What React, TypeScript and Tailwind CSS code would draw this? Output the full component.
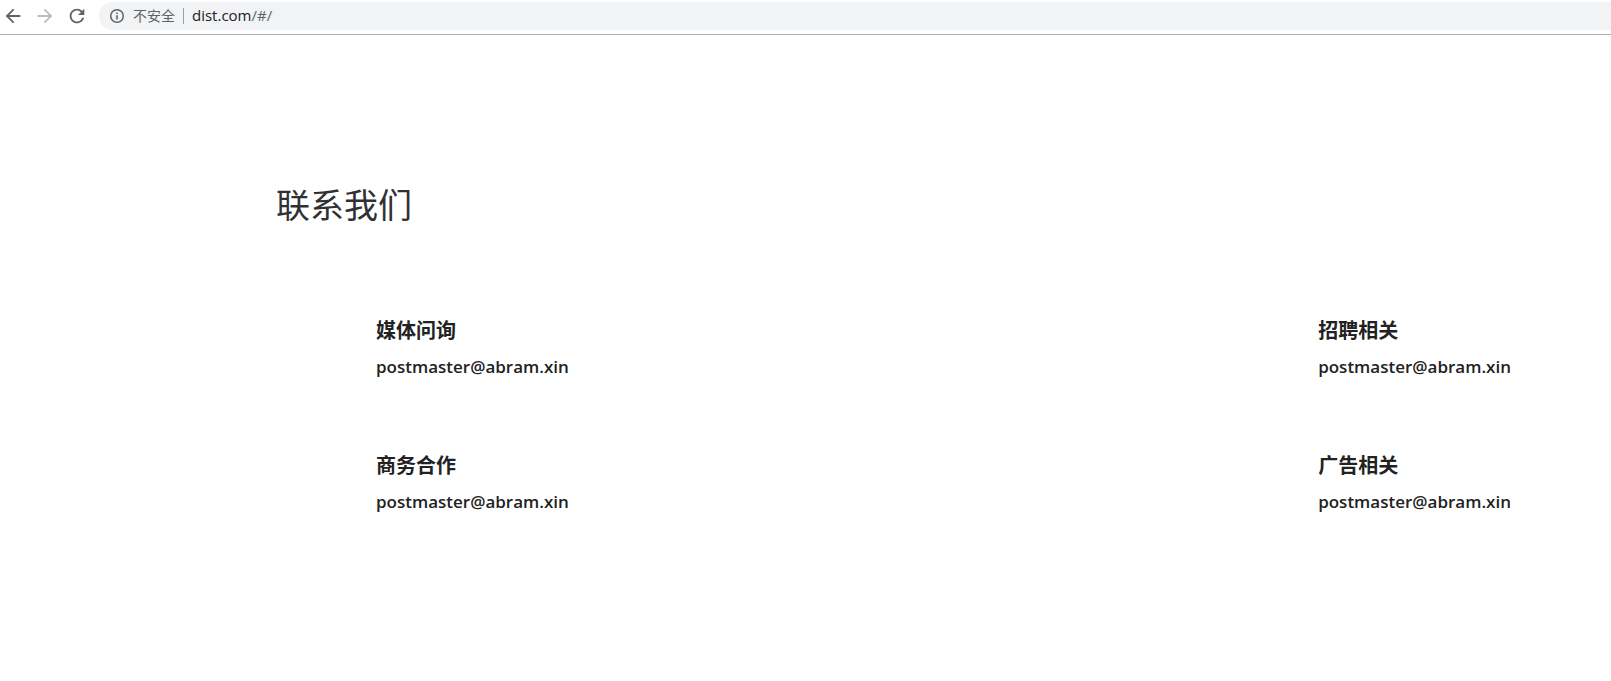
import React from "react";
import { MdArrowBack, MdArrowForward, MdRefresh } from "react-icons/md";

const contacts = [
  { title: "媒体问询", email: "postmaster@abram.xin" },
  { title: "招聘相关", email: "postmaster@abram.xin" },
  { title: "商务合作", email: "postmaster@abram.xin" },
  { title: "广告相关", email: "postmaster@abram.xin" },
];

const InfoIcon = () => (
  <svg viewBox="0 0 16 16" className="size-4" fill="none" stroke="currentColor" aria-hidden="true">
    <circle cx="8" cy="8" r="6.3" strokeWidth="1.5" />
    <path d="M8 7.2v4.2M8 4.4v1.6" strokeWidth="1.6" />
  </svg>
);

const BrowserBar = () => {
  return (
    <header className="flex items-center h-[35px] pt-0.5 pb-1 pl-0.5 border-b border-[#b0b0b0] bg-white">
      <nav className="flex items-center gap-2.5 text-[#5f6368]">
        <button aria-label="后退" className="w-[22px] flex justify-center">
          <MdArrowBack className="size-[22px]" />
        </button>
        <button aria-label="前进" disabled className="w-[22px] flex justify-center text-[#babcbe]">
          <MdArrowForward className="size-[22px]" />
        </button>
        <button aria-label="刷新" className="w-[22px] flex justify-center">
          <MdRefresh className="size-[22px]" />
        </button>
      </nav>

      {/* Address bar */}
      <div className="flex flex-1 items-center h-7 ml-[11px] pl-2.5 rounded-l-full bg-[#f1f3f4] text-sm text-[#5f6368]">
        <InfoIcon />
        <span className="ml-2">不安全</span>
        <span className="w-px h-4 mx-2 bg-[#9aa0a6]" />
        <span className="text-[15px] font-['Open_Sans',sans-serif]">
          <span className="text-[#202124]">dist.com</span>/#/
        </span>
      </div>
    </header>
  );
};

const App = () => {
  return (
    <div className="min-h-screen bg-white font-['Noto_Sans','Noto_Sans_CJK_SC',sans-serif]">
      <BrowserBar />
      <main className="pt-[145px] pl-[276px] pr-[100px] text-[#222222]">
        <h1 className="text-[34px] leading-[50px] font-normal text-[#303133]">联系我们</h1>
        <div className="grid grid-cols-[1fr_auto] gap-y-[67px] mt-[85px] ml-[100px]">
          {contacts.map((item) => (
            <section key={item.title}>
              <h2 className="text-xl leading-8 font-bold">{item.title}</h2>
              <a
                href={"mailto:" + item.email}
                className="block mt-1 text-[17px] leading-8 font-semibold font-['Open_Sans',sans-serif]"
              >
                {item.email}
              </a>
            </section>
          ))}
        </div>
      </main>
    </div>
  );
};

export default App;
